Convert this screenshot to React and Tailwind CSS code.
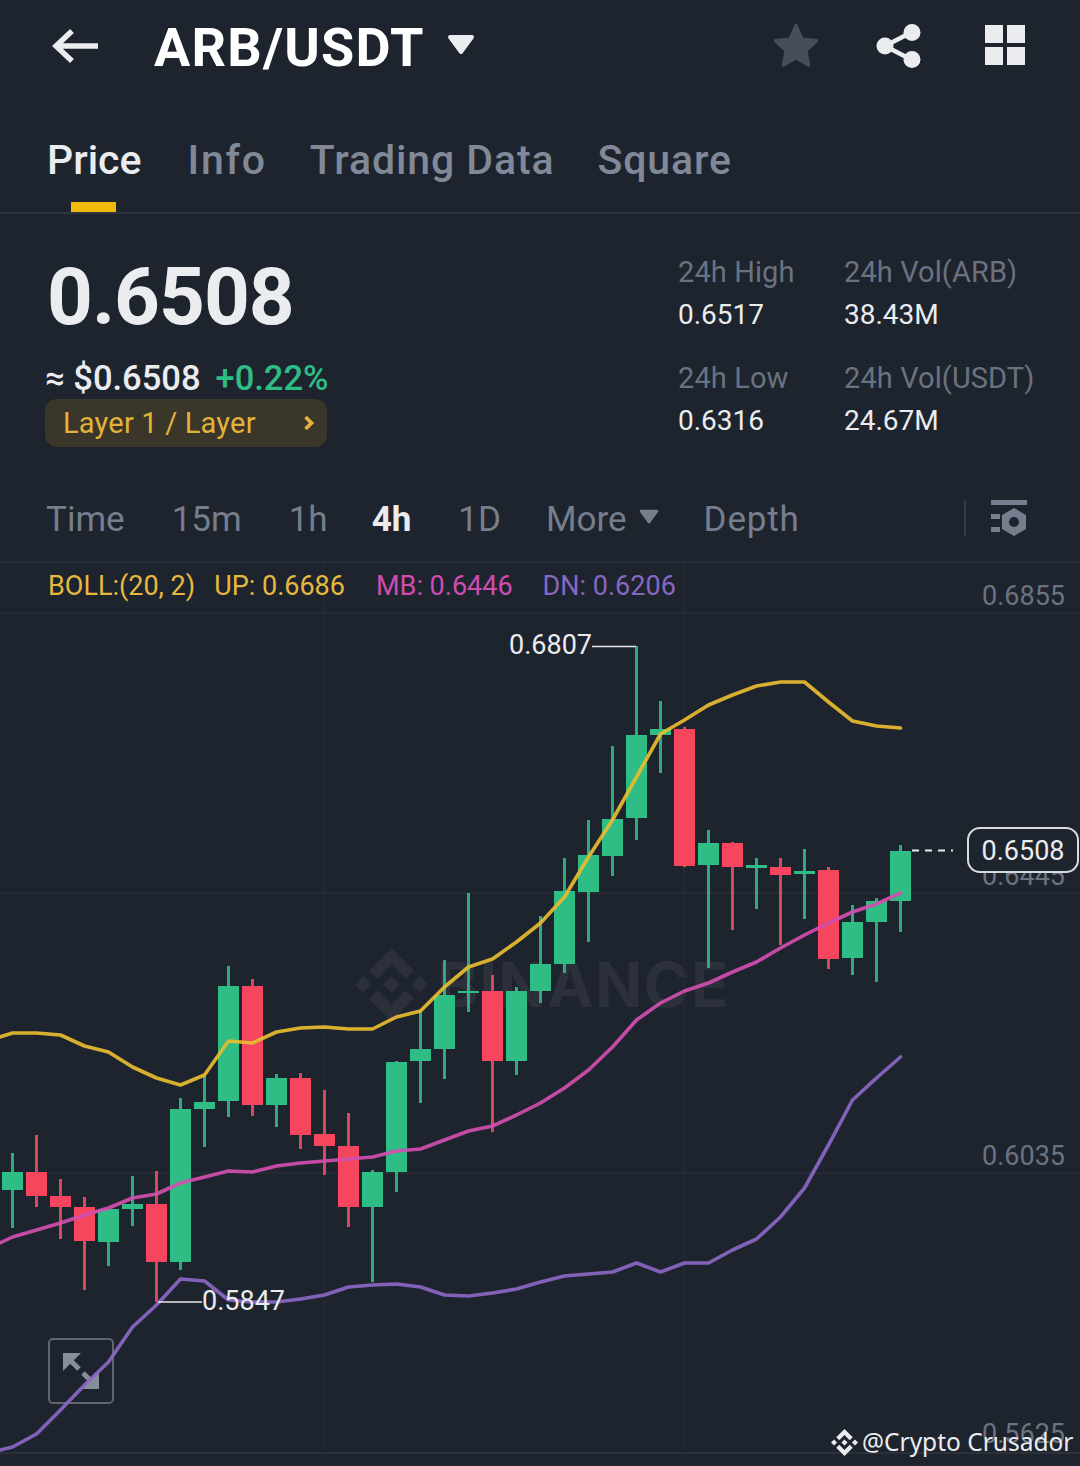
import React from 'react';

const BINANCE_PATH =
  'M16.624 13.9202l2.7175 2.7154-7.353 7.353-7.353-7.352 2.7175-2.7164 4.6355 4.6595 4.6356-4.6595zm4.6366-4.6366L24 12l-2.7154 2.7164L18.5682 12l2.6924-2.7164zm-9.272.001l2.7163 2.6914-2.7164 2.7174v-.001L9.2721 12l2.7164-2.7154zm-9.2722-.001L5.4088 12l-2.6914 2.6924L0 12l2.7164-2.7164zM11.9885.0115l7.353 7.329-2.7174 2.7154-4.6356-4.6356-4.6355 4.6595-2.7174-2.7154 7.353-7.353z';

// g / r, wick top, wick bottom, body top, body bottom (page y)
const candles = [
  ['g', 1153, 1228, 1172, 1190],
  ['r', 1135, 1207, 1172, 1196],
  ['r', 1179, 1239, 1196, 1207],
  ['r', 1197, 1290, 1207, 1241],
  ['g', 1209, 1266, 1209, 1242],
  ['g', 1176, 1226, 1204, 1209],
  ['r', 1171, 1302, 1204, 1262],
  ['g', 1098, 1270, 1109, 1262],
  ['g', 1075, 1147, 1102, 1109],
  ['g', 966, 1117, 986, 1101],
  ['r', 979, 1116, 986, 1105],
  ['g', 1074, 1127, 1078, 1105],
  ['r', 1073, 1149, 1078, 1135],
  ['r', 1090, 1175, 1134, 1146],
  ['r', 1113, 1227, 1146, 1207],
  ['g', 1170, 1282, 1172, 1207],
  ['g', 1061, 1192, 1062, 1172],
  ['g', 1010, 1103, 1049, 1061],
  ['g', 960, 1079, 995, 1049],
  ['g', 893, 1012, 991, 993],
  ['r', 975, 1132, 991, 1061],
  ['g', 987, 1075, 991, 1061],
  ['g', 916, 1003, 964, 991],
  ['g', 858, 973, 891, 964],
  ['g', 820, 942, 855, 892],
  ['g', 746, 876, 819, 856],
  ['g', 646, 840, 735, 818],
  ['g', 701, 773, 729, 735],
  ['r', 727, 867, 729, 866],
  ['g', 830, 968, 843, 865],
  ['r', 842, 930, 843, 867],
  ['g', 858, 909, 865, 868],
  ['r', 858, 945, 867, 875],
  ['g', 849, 919, 871, 874],
  ['r', 867, 969, 870, 959],
  ['g', 905, 975, 922, 958],
  ['g', 898, 982, 901, 922],
  ['g', 845, 932, 851, 901],
];

const upper = [1033, 1033, 1035, 1046, 1052, 1067, 1078, 1085, 1075, 1041, 1043, 1032, 1028, 1027, 1029, 1029, 1017, 1011, 987, 967, 959, 942, 923, 897, 857, 820, 777, 734, 720, 705, 695, 686, 682, 682, 702, 721, 726, 728];
const middle = [1237, 1230, 1223, 1215, 1208, 1198, 1194, 1183, 1177, 1171, 1172, 1166, 1163, 1161, 1159, 1157, 1151, 1149, 1140, 1131, 1126, 1115, 1103, 1088, 1070, 1047, 1020, 1003, 991, 983, 972, 962, 948, 935, 923, 912, 904, 893];
const lower = [1447, 1434, 1410, 1385, 1362, 1327, 1305, 1279, 1281, 1300, 1302, 1302, 1299, 1295, 1287, 1285, 1284, 1287, 1295, 1296, 1293, 1289, 1282, 1276, 1274, 1272, 1263, 1272, 1263, 1263, 1250, 1239, 1217, 1188, 1145, 1100, 1078, 1057];

const cx = (i) => 12.5 + i * 24;
const linePoints = (ys, startY) => `0,${startY} ` + ys.map((y, i) => `${cx(i)},${y}`).join(' ');

const Stat = ({ label, value }) => (
  <div className="flex flex-col gap-[9px] whitespace-nowrap">
    <span className="text-[29px] leading-[34px] tracking-[0.1px] text-[#6a7280]">{label}</span>
    <span className="text-[28px] leading-[34px] text-[#eaecef]">{value}</span>
  </div>
);

const Caret = ({ className }) => (
  <svg viewBox="0 0 28 21" className={className}>
    <path d="M3 3h22L14 18z" fill="currentColor" stroke="currentColor" strokeWidth="4" strokeLinejoin="round" />
  </svg>
);

const Chart = () => (
  <svg viewBox="0 563 1080 903" className="absolute inset-0 w-[1080px] h-[903px]">
    {/* grid */}
    <g stroke="#282d38" strokeWidth="1.5">
      <line x1="0" y1="613" x2="1080" y2="613" />
      <line x1="0" y1="893" x2="1080" y2="893" />
      <line x1="0" y1="1173" x2="1080" y2="1173" />
      <line x1="0" y1="1453" x2="1080" y2="1453" stroke="#313641" />
      <line x1="324" y1="563" x2="324" y2="1453" stroke="#242934" />
      <line x1="684" y1="563" x2="684" y2="1453" stroke="#242934" />
    </g>
    {/* candles */}
    {candles.map(([c, wt, wb, bt, bb], i) => {
      const fill = c === 'g' ? '#2ebd85' : '#f6465d';
      const wick = c === 'g' ? '#2fab7e' : '#d9475c';
      return (
        <g key={i}>
          <rect x={cx(i) - 1.5} y={wt} width="3" height={wb - wt} fill={wick} />
          <rect x={cx(i) - 10.5} y={bt} width="21" height={Math.max(bb - bt, 2)} fill={fill} />
        </g>
      );
    })}
    {/* bollinger */}
    <g fill="none" strokeWidth="3.6" strokeLinejoin="round" strokeLinecap="round" opacity="0.92">
      <polyline points={linePoints(upper, 1037)} stroke="#e8bc30" />
      <polyline points={linePoints(middle, 1243)} stroke="#d24fb0" />
      <polyline points={linePoints(lower, 1450)} stroke="#8a68c4" />
    </g>
    {/* high / low leaders */}
    <g stroke="#e6e8ec" strokeWidth="1.5" fill="none">
      <path d="M592 646.5H636" />
      <path d="M158 1302H202" />
      <path d="M912 850.5H953" strokeWidth="2" strokeDasharray="7 6" />
    </g>
  </svg>
);

export default function App() {
  return (
    <div className="w-[1080px] h-[1466px] overflow-hidden flex flex-col bg-[#1e242e] font-['Roboto',sans-serif] text-[#eaecef]">
      {/* top bar */}
      <div className="h-[92px] flex items-center pl-[51px] pr-[55px] shrink-0">
        <svg viewBox="0 0 48 36" className="w-[48px] h-[36px] text-[#eaecef]">
          <path d="M47 18H5M21 3L5 18l16 15" fill="none" stroke="currentColor" strokeWidth="5.5" />
        </svg>
        <span className="ml-[55px] mt-[4px] text-[54px] leading-none font-bold text-white tracking-[1.2px]">ARB/USDT</span>
        <Caret className="ml-[22px] w-[28px] h-[21px] mb-[4px] text-[#eaecef]" />
        <div className="ml-auto flex items-center">
          <svg viewBox="0 0 48 48" className="w-[52px] h-[52px] text-[#474d5a]">
            <path d="M24 5l5.6 12.6 13.4 1.5-10 9.2 2.8 13.5L24 35l-11.8 6.8L15 28.3 5 19.1l13.4-1.5z" fill="currentColor" stroke="currentColor" strokeWidth="3" strokeLinejoin="round" />
          </svg>
          <svg viewBox="0 0 46 46" className="ml-[54px] w-[46px] h-[46px] text-[#eaecef]">
            <g fill="currentColor" stroke="currentColor">
              <path d="M9 23L36 9M9 23l27 14" strokeWidth="4.5" fill="none" />
              <circle cx="9" cy="23" r="8.5" stroke="none" />
              <circle cx="36" cy="9.5" r="8.5" stroke="none" />
              <circle cx="36" cy="36.5" r="8.5" stroke="none" />
            </g>
          </svg>
          <div className="ml-[63px] mb-[2px] grid grid-cols-2 gap-[4px]">
            <div className="w-[18px] h-[18px] bg-[#eaecef]" />
            <div className="w-[18px] h-[18px] bg-[#eaecef]" />
            <div className="w-[18px] h-[18px] bg-[#eaecef]" />
            <div className="w-[18px] h-[18px] bg-[#eaecef]" />
          </div>
        </div>
      </div>

      {/* tabs */}
      <div className="h-[122px] shrink-0 flex gap-[45px] px-[47px] pt-[42px] border-b-2 border-[#2f3540] text-[41px] leading-[52px] font-medium tracking-[0.9px] text-[#818998]">
        <div className="relative h-full tracking-normal text-[#eaecef]">
          Price
          <div className="absolute left-[24px] bottom-0 w-[45px] h-[10px] bg-[#f0b90b]" />
        </div>
        <div className="ml-[1px] tracking-[1.8px]">Info</div>
        <div className="ml-[-2px]">Trading Data</div>
        <div className="ml-[-2px]">Square</div>
      </div>

      {/* price summary */}
      <div className="h-[271px] shrink-0 relative flex">
        <div className="pl-[45px] flex flex-col items-start">
          <span className="mt-[38px] ml-[2px] text-[80px] leading-[90px] font-bold tracking-[-1px] text-[#eaecef]">0.6508</span>
          <div className="mt-[15px] flex items-baseline gap-[15px] text-[34.5px] leading-[42px] font-medium">
            <span>≈ $0.6508</span>
            <span className="text-[#2ebd85]">+0.22%</span>
          </div>
          <div className="w-[282px] h-[48px] rounded-[12px] bg-[#3a3629] flex items-center justify-between pl-[18px] pr-[12px] text-[29px] tracking-[0.2px] text-[#e3b23a]">
            <span className="mt-[2px]">Layer 1 / Layer</span>
            <svg viewBox="0 0 12 16" className="w-[12px] h-[16px]">
              <path d="M2.5 2l6 6-6 6" fill="none" stroke="currentColor" strokeWidth="3.8" />
            </svg>
          </div>
        </div>
        <div className="ml-auto mr-[46px] mt-[41px] grid grid-cols-[166px_190px] content-start gap-y-[29px]">
          <Stat label="24h High" value="0.6517" />
          <Stat label="24h Vol(ARB)" value="38.43M" />
          <Stat label="24h Low" value="0.6316" />
          <Stat label="24h Vol(USDT)" value="24.67M" />
        </div>
      </div>

      {/* intervals */}
      <div className="h-[78px] shrink-0 flex items-center pl-[46px] pr-[52px] border-b-2 border-[#282d38] text-[35px] text-[#767e8d]">
        <div className="flex items-center gap-[47px] mb-[6px]">
          <span>Time</span>
          <span>15m</span>
          <span>1h</span>
          <span className="ml-[-3px] font-bold text-[#eaecef]">4h</span>
          <span>1D</span>
          <span className="ml-[-2px] flex items-center gap-[12px]">
            More
            <Caret className="w-[20px] h-[15px] mb-[8px]" />
          </span>
          <span className="ml-[-2px] tracking-[0.8px]">Depth</span>
        </div>
        <div className="ml-auto mb-[10px] w-[2px] h-[36px] bg-[#353b47]" />
        <svg viewBox="0 0 38 38" className="ml-[24px] mb-[10px] w-[38px] h-[38px] text-[#767e8d]">
          <g fill="currentColor">
            <rect x="1" y="1" width="36" height="5" />
            <rect x="1" y="15" width="9" height="5" />
            <rect x="1" y="28" width="9" height="5" />
            <path fillRule="evenodd" d="M24 9l12 7v14l-12 7-12-7V16zm0 9a5 5 0 100 10 5 5 0 000-10z" />
          </g>
        </svg>
      </div>

      {/* chart */}
      <div className="relative flex-1">
        <div className="absolute left-[355px] top-[385px] flex items-center">
          <svg viewBox="0 0 24 24" className="w-[73px] h-[73px] text-[#2b303a]">
            <path d={BINANCE_PATH} fill="currentColor" />
          </svg>
          <span className="ml-[9px] text-[62px] leading-none font-['Inter',sans-serif] font-bold tracking-[1.5px] text-[#2b303a]">BINANCE</span>
        </div>
        <div className="absolute left-[48px] top-[775px] w-[66px] h-[66px] rounded-[5px] border-2 border-[#5f6672] flex items-center justify-center">
          <svg viewBox="0 0 38 38" className="w-[38px] h-[38px] text-[#848e9c]">
            <g fill="currentColor">
              <path d="M1 1h18L1 19z" />
              <path d="M37 37H19l18-18z" />
            </g>
            <path d="M6 6l11 11M21 21l11 11" stroke="currentColor" strokeWidth="5" />
          </svg>
        </div>

        <Chart />

        {/* legend */}
        <div className="relative h-[48px] flex items-center pl-[48px] pb-[2px] text-[27px] text-[#e6b93e]">
          <span>BOLL:(20, 2)</span>
          <span className="ml-[19px]">UP: 0.6686</span>
          <span className="ml-[31px] text-[#d04cb0]">MB: 0.6446</span>
          <span className="ml-[30px] text-[#8867c2]">DN: 0.6206</span>
        </div>

        {/* price axis */}
        <span className="absolute right-[15px] top-[15px] text-[27px] leading-[36px] text-[#6c7380]">0.6855</span>
        <span className="absolute right-[15px] top-[295px] text-[27px] leading-[36px] text-[#6c7380]">0.6445</span>
        <span className="absolute right-[15px] top-[575px] text-[27px] leading-[36px] text-[#6c7380]">0.6035</span>
        <span className="absolute right-[15px] top-[853px] text-[27px] leading-[36px] text-[#6c7380]">0.5625</span>

        <div className="absolute left-[967px] top-[264px] w-[112px] h-[46px] pt-[3px] rounded-[13px] border-2 border-[#d8dade] bg-[#1e242e] flex items-center justify-center text-[27px] text-[#eaecef]">
          0.6508
        </div>

        <span className="absolute left-[509px] top-[64px] text-[27px] leading-[36px] text-[#eaecef]">0.6807</span>
        <span className="absolute left-[202px] top-[720px] text-[27px] leading-[36px] text-[#eaecef]">0.5847</span>

        {/* share credit */}
        <div className="absolute left-[831px] top-[864px] flex items-center gap-[4px] text-[#eaecef]">
          <svg viewBox="0 0 24 24" className="w-[27px] h-[27px]">
            <path d={BINANCE_PATH} fill="currentColor" />
          </svg>
          <span className="text-[24.5px] leading-[30px] font-['Noto_Sans',sans-serif] whitespace-nowrap">@Crypto Crusador</span>
        </div>
      </div>
    </div>
  );
}
